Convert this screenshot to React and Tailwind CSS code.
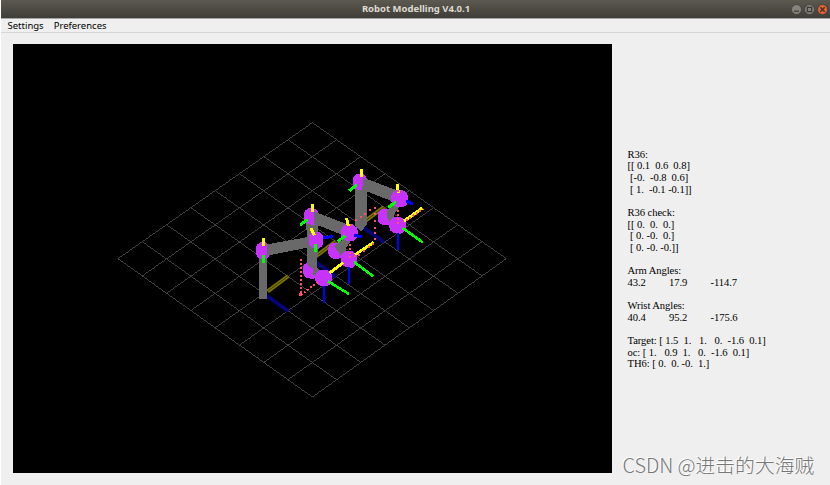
import clsx from 'clsx'

const CELLS = 8
const GRID = { top: [637, 38], right: [1219, 446], bottom: [637, 861], left: [54, 446] }

const lerp = (a, b, t) => [a[0] + (b[0] - a[0]) * t, a[1] + (b[1] - a[1]) * t]

function FloorGrid() {
  const ticks = Array.from({ length: CELLS + 1 }, (_, i) => i / CELLS)
  const lines = ticks.flatMap((t) => [
    [lerp(GRID.top, GRID.right, t), lerp(GRID.left, GRID.bottom, t)],
    [lerp(GRID.top, GRID.left, t), lerp(GRID.right, GRID.bottom, t)],
  ])
  return (
    <g stroke="#444" strokeWidth="2.8">
      {lines.map(([a, b], i) => (
        <line key={i} x1={a[0]} y1={a[1]} x2={b[0]} y2={b[1]} />
      ))}
    </g>
  )
}

function Seg({ d, color, width = 9 }) {
  return <path d={d} stroke={color} strokeWidth={width} fill="none" />
}

function BaseAxes({ x, y }) {
  return (
    <g shapeRendering="auto">
      <Seg d={`M${x} ${y}l62 -46`} color="#7d7700" width={12} />
      <Seg d={`M${x} ${y}l62 -46`} color="#3f3b00" width={3} />
      <Seg d={`M${x - 2} ${y + 14}l64 46`} color="#00008c" width={11} />
      <Seg d={`M${x - 2} ${y + 14}l64 46`} color="#101050" width={3} />
    </g>
  )
}

function Joint({ x, y, rx = 22, ry = 24 }) {
  const pts = [
    [-0.45, -1], [0.4, -1], [0.85, -0.65], [1, -0.3], [1, 0.3], [0.8, 0.75],
    [0.4, 1.05], [-0.35, 1], [-0.85, 0.7], [-1.02, 0.25], [-1, -0.35], [-0.85, -0.7],
  ]
  return <polygon points={pts.map(([a, b]) => `${x + a * rx},${y + b * ry}`).join(' ')} fill="#c832ff" />
}

function Dots({ d }) {
  return <path d={d} stroke="#ff5064" strokeWidth="6" strokeDasharray="6 6" fill="none" />
}

const GRAY = '#696969'

function BackArm() {
  return (
    <g>
      <BaseAxes x={790} y={337} />
      <path d="M765 225H800V345L783 364L765 345Z" fill={GRAY} />
      <Joint x={780} y={216} />
      <path d="M789 203L899 244L890 279L787 239Z" fill={GRAY} />
      <Joint x={855} y={321} />
      <path d="M878 285L901 287L883 312V331L872 342L862 322V300Z" fill={GRAY} />
      <Joint x={899} y={266} rx={25} ry={25} />
      <Joint x={893} y={346} rx={25} ry={24} />
      <Seg d="M783 178V202" color="#ffff00" />
      <Seg d="M771 225L748 242" color="#00ff00" />
      <Seg d="M892 223L895 249" color="#ffff00" />
      <Seg d="M918 273L939 282" color="#0000ff" />
      <Seg d="M888 276L865 292" color="#00ff00" />
      <Seg d="M912 333L967 294" color="#ffff00" />
      <Seg d="M908 354L968 397" color="#00ff00" width={8} />
      <Seg d="M893 370V420" color="#0000ff" width={7} />
    </g>
  )
}

function MiddleArm() {
  return (
    <g>
      <BaseAxes x={646} y={440} />
      <path d="M619 325H655L652 465L637 482L621 462Z" fill={GRAY} />
      <Joint x={634} y={319} />
      <path d="M643 305L753 347L744 381L641 341Z" fill={GRAY} />
      <Joint x={707} y={422} />
      <path d="M731 387L755 389L737 415V433L726 444L714 425L702 408Z" fill={GRAY} />
      <Joint x={748} y={368} rx={25} ry={25} />
      <Joint x={747} y={448} rx={25} ry={24} />
      <Seg d="M637 282V307" color="#ffff00" />
      <Seg d="M623 329L600 345" color="#00ff00" />
      <Seg d="M740 324L745 348" color="#ffff00" />
      <Seg d="M763 375L785 381" color="#0000ff" />
      <Seg d="M736 378L713 394" color="#00ff00" />
      <Seg d="M765 434L821 397" color="#ffff00" />
      <Seg d="M762 456L820 499" color="#00ff00" width={8} />
      <Seg d="M746 471V521" color="#0000ff" width={7} />
    </g>
  )
}

function FrontArm() {
  return (
    <g>
      <BaseAxes x={503} y={544} />
      <path d="M478 436H502V566H477Z" fill={GRAY} />
      <Joint x={489} y={422} rx={21} ry={25} />
      <path d="M502 403L640 378L646 408L502 437Z" fill={GRAY} />
      <Joint x={631} y={481} />
      <path d="M621 400H655L650 474L666 485L651 505L637 493L640 475L624 468Z" fill={GRAY} />
      <Joint x={648} y={390} rx={22} ry={25} />
      <Joint x={671} y={504} rx={25} ry={24} />
      <Seg d="M490 384V407" color="#ffff00" />
      <Seg d="M489 436V459" color="#00ff00" />
      <Seg d="M632 354L643 376" color="#ffff00" />
      <Seg d="M669 384L698 379" color="#0000ff" />
      <Seg d="M647 402V426" color="#00ff00" />
      <Seg d="M689 489L730 458" color="#ffff00" />
      <Seg d="M684 514L747 552" color="#00ff00" width={8} />
      <Seg d="M671 527V579" color="#0000ff" width={7} />
    </g>
  )
}

function Trajectory() {
  return (
    <g>
      <Dots d="M604 448V552" />
      <Dots d="M611 548L654 517" />
      <circle cx="602" cy="553" r="6" fill="#ff5064" />
      <Dots d="M895 299V345" />
      <Dots d="M895 239V252" />
      <Dots d="M918 332L970 296" />
      <Dots d="M750 401V447" />
      {[[752, 345], [767, 331], [782, 321], [796, 311], [811, 301], [824, 294], [824, 312], [824, 333], [824, 353],
        [824, 370], [824, 386], [820, 402], [806, 411], [792, 422], [777, 434], [764, 437]].map(([x, y]) => (
        <rect key={`${x}-${y}`} x={x - 3} y={y - 3} width="6" height="6" fill="#ff5064" />
      ))}
    </g>
  )
}

function Viewport() {
  return (
    <svg viewBox="-261 -198 1797 1287" className="h-[429px] w-[599px] shrink-0 bg-black" shapeRendering="crispEdges">
      <FloorGrid />
      <BackArm />
      <MiddleArm />
      <FrontArm />
      <Trajectory />
    </svg>
  )
}

function WindowButton({ close, children }) {
  return (
    <span className={clsx('flex size-[11px] items-center justify-center rounded-full border border-[#45433d]', close ? 'bg-[#f0602f]' : 'bg-[#85837c]')}>
      <svg viewBox="0 0 9 9" className="size-[9px] shrink-0" fill="none" stroke="#3b3934" strokeWidth="1.2">
        {children}
      </svg>
    </span>
  )
}

function TitleBar() {
  return (
    <div className="grid h-[19px] grid-cols-[1fr_auto_1fr] items-center border-b border-[#a5a4a1] bg-linear-to-b from-[#5c5a50] to-[#3e3d38] pr-[2px] pl-[3px]">
      <span />
      <h1 className="font-['Noto_Sans'] text-[9.5px] leading-none font-bold whitespace-nowrap text-[#dfdbd2]">
        Robot Modelling V4.0.1
      </h1>
      <div className="flex justify-end gap-[2px]">
        <WindowButton><path d="M2 6.2H7" /></WindowButton>
        <WindowButton><path d="M2.3 2.3H6.7V6.7H2.3Z" /></WindowButton>
        <WindowButton close><path d="M2.3 2.3L6.7 6.7M6.7 2.3L2.3 6.7" strokeWidth="1.6" /></WindowButton>
      </div>
    </div>
  )
}

function AngleRow({ values }) {
  return (
    <div className="grid grid-cols-[41.5px_41.5px_auto]">
      {values.map((v) => <span key={v}>{v}</span>)}
    </div>
  )
}

function Readout() {
  return (
    <div className="flex flex-col gap-[11.65px] font-['Liberation_Serif',serif] text-[10.6px] leading-[11.65px] tracking-[-0.07px] whitespace-pre text-black">
      <p>{'R36:\n[[ 0.1  0.6  0.8]\n [-0.  -0.8  0.6]\n [ 1.  -0.1 -0.1]]'}</p>
      <p>{'R36 check:\n[[ 0.  0.  0.]\n [ 0. -0.  0.]\n [ 0. -0. -0.]]'}</p>
      <div>
        <p>Arm Angles:</p>
        <AngleRow values={['43.2', '17.9', '-114.7']} />
      </div>
      <div>
        <p>Wrist Angles:</p>
        <AngleRow values={['40.4', '95.2', '-175.6']} />
      </div>
      <p>{'Target: [ 1.5  1.   1.   0.  -1.6  0.1]\noc: [ 1.   0.9  1.   0.  -1.6  0.1]\nTH6: [ 0.  0. -0.  1.]'}</p>
    </div>
  )
}

export default function App() {
  return (
    <div className="flex h-[485px] w-[830px] flex-col overflow-hidden border-l border-white bg-[#efefef]">
      <TitleBar />
      <nav className="flex h-[14px] shrink-0 items-center gap-[10px] border-b border-[#d6d6d6] pl-[6.5px] font-['Noto_Sans'] text-[9.5px] leading-none text-black">
        <span>Settings</span>
        <span>Preferences</span>
      </nav>
      <main className="flex flex-1 pt-[11px] pl-[12px]">
        <Viewport />
        <aside className="flex flex-1 flex-col justify-between pt-[104.6px] pl-[15.5px]">
          <Readout />
          <p className="-ml-[5px] pb-[6px] font-['Noto_Sans_CJK_SC',sans-serif] text-[19.8px] leading-[28px] font-light whitespace-nowrap text-[#777] [text-shadow:-1px_-1px_0_#fff]">
            CSDN @进击的大海贼
          </p>
        </aside>
      </main>
    </div>
  )
}
